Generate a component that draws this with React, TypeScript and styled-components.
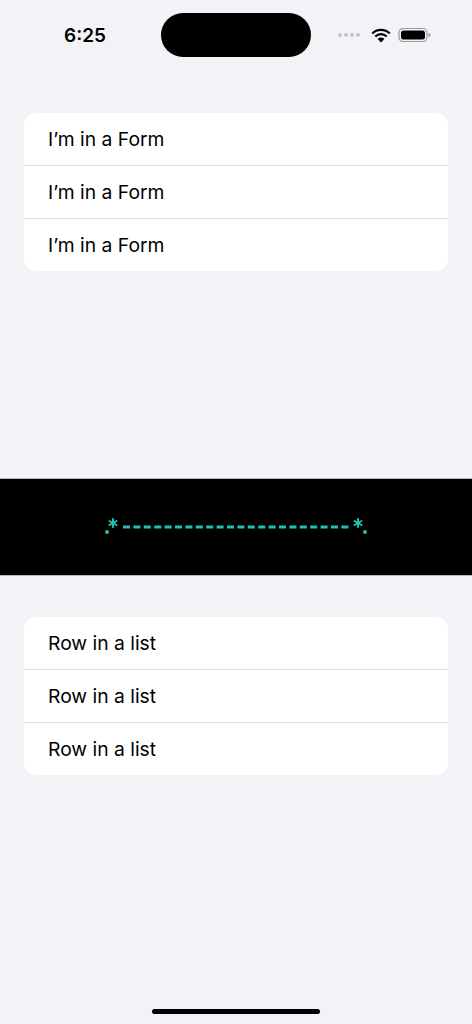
import React from "react";
import styled, { createGlobalStyle } from "styled-components";

const GlobalStyle = createGlobalStyle`
  html, body {
    margin: 0;
    padding: 0;
    background: #f2f2f7;
  }
  body {
    font-family: Inter, "Noto Sans", "Liberation Sans", sans-serif;
    -webkit-font-smoothing: antialiased;
  }
`;

const Screen = styled.div`
  position: relative;
  width: 472px;
  height: 1024px;
  background: #f2f2f7;
  overflow: hidden;
  display: flex;
  flex-direction: column;
`;

const StatusBar = styled.div`
  height: 70px;
  display: flex;
  align-items: center;
  justify-content: space-between;
  padding: 0 40px 0 64px;
  box-sizing: border-box;
`;

const Time = styled.span`
  font-size: 19px;
  font-weight: 600;
  color: #000;
  width: 60px;
`;

const Island = styled.div`
  width: 150px;
  height: 44px;
  border-radius: 22px;
  background: #000;
  margin-left: 37px;
`;

const StatusIcons = styled.div`
  display: flex;
  align-items: center;
  gap: 7px;
  margin-left: auto;
`;

const Signal = styled.div`
  display: flex;
  gap: 2px;
  margin-right: 4px;
  span {
    width: 4px;
    height: 4px;
    border-radius: 50%;
    background: #c4c4c8;
  }
`;

const Card = styled.div<{ $top: number }>`
  margin: ${(p) => p.$top}px 24px 0;
  background: #fff;
  border-radius: 12px;
  overflow: hidden;
`;

const Row = styled.div`
  height: 52px;
  padding-left: 24px;
  display: flex;
  align-items: center;
  font-size: 19.3px;
  color: #000;
  & + & {
    border-top: 1px solid #e0e0e4;
  }
`;

const Band = styled.div`
  margin-top: 207px;
  height: 96px;
  background: #000;
  border-top: 1px solid #b8b8bc;
  border-bottom: 1px solid #b8b8bc;
  display: flex;
  align-items: center;
  justify-content: center;
`;

const HomeBar = styled.div`
  position: absolute;
  left: 152px;
  bottom: 10px;
  width: 168px;
  height: 5px;
  border-radius: 3px;
  background: #000;
`;

const teal = "#1fc2b0";

const Asterisk = ({ x, y }: { x: number; y: number }) => (
  <g stroke={teal} strokeWidth={2} strokeLinecap="round">
    <line x1={x} y1={y - 4} x2={x} y2={y + 4} />
    <line x1={x - 3.5} y1={y - 2} x2={x + 3.5} y2={y + 2} />
    <line x1={x - 3.5} y1={y + 2} x2={x + 3.5} y2={y - 2} />
  </g>
);

const Line = () => (
  <svg width="272" height="24" viewBox="0 0 272 24">
    <circle cx={7} cy={17} r={2} fill={teal} />
    <Asterisk x={13} y={8} />
    <line
      x1={23}
      y1={12}
      x2={250}
      y2={12}
      stroke={teal}
      strokeWidth={3}
      strokeDasharray="7 3.4"
    />
    <Asterisk x={258} y={8} />
    <circle cx={265} cy={17} r={2} fill={teal} />
  </svg>
);

const formRows = ["I’m in a Form", "I’m in a Form", "I’m in a Form"];
const listRows = ["Row in a list", "Row in a list", "Row in a list"];

export default function App() {
  return (
    <>
      <GlobalStyle />
      <Screen>
        <StatusBar>
          <Time>6:25</Time>
          <Island />
          <StatusIcons>
            <Signal>
              <span />
              <span />
              <span />
              <span />
            </Signal>
            <svg width="20" height="15" viewBox="0 0 20 15">
              <path
                d="M10 14.5 L6.6 10.9 A4.8 4.8 0 0 1 13.4 10.9 Z"
                fill="#000"
              />
              <path
                d="M4.3 8.6 A8 8 0 0 1 15.7 8.6"
                stroke="#000"
                strokeWidth="2.2"
                fill="none"
              />
              <path
                d="M1.3 5.5 A12.3 12.3 0 0 1 18.7 5.5"
                stroke="#000"
                strokeWidth="2.2"
                fill="none"
              />
            </svg>
            <svg width="34" height="16" viewBox="0 0 34 16">
              <rect
                x="1"
                y="1.5"
                width="28"
                height="13"
                rx="4"
                fill="none"
                stroke="#9a9a9e"
                strokeWidth="1.2"
              />
              <rect x="3" y="3.5" width="24" height="9" rx="2.5" fill="#000" />
              <rect x="30.5" y="6" width="1.8" height="4" rx="0.9" fill="#9a9a9e" />
            </svg>
          </StatusIcons>
        </StatusBar>

        <Card $top={43}>
          {formRows.map((t, i) => (
            <Row key={i}>{t}</Row>
          ))}
        </Card>

        <Band>
          <Line />
        </Band>

        <Card $top={41}>
          {listRows.map((t, i) => (
            <Row key={i}>{t}</Row>
          ))}
        </Card>

        <HomeBar />
      </Screen>
    </>
  );
}
